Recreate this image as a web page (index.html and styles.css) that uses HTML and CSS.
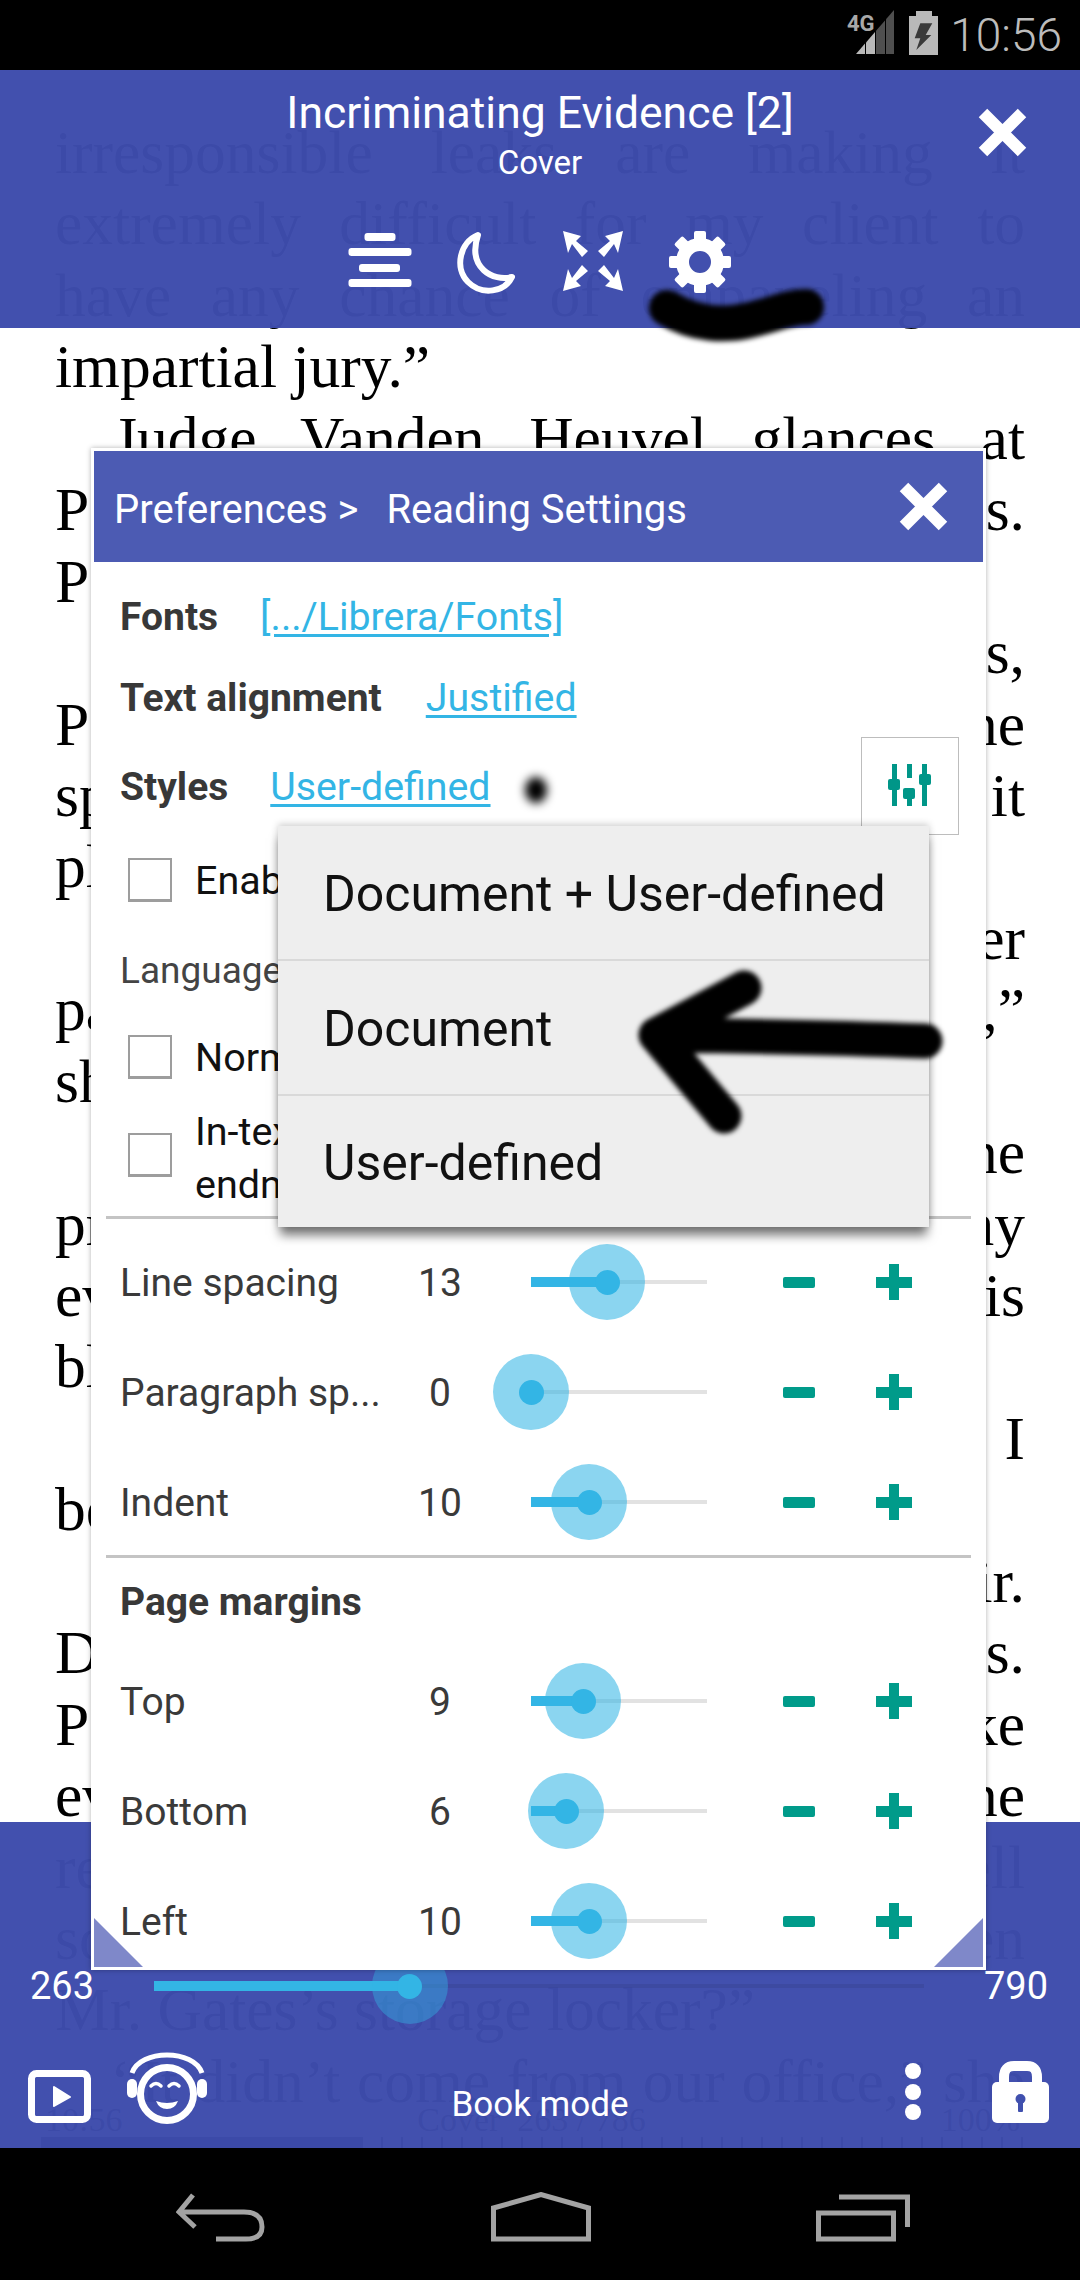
FILE: index.html
```html
<!DOCTYPE html>
<html lang="en">
<head>
<meta charset="utf-8">
<title>Reading Settings</title>
<link rel="stylesheet" href="styles.css">
</head>
<body>
<div class="page">
  <header class="status">
    <svg class="sig" width="50" height="50" viewBox="0 0 50 50">
      <polygon class="lit" points="11,46 20,35.6 20,46"/>
      <polygon class="lit" points="21,34.4 30,24 30,46 21,46"/>
      <polygon class="dim" points="31,22.8 40,12.4 40,46 31,46"/>
      <polygon class="dim" points="41,11.3 49,2 49,46 41,46"/>
      <text class="sig-text" x="2" y="23">4G</text>
    </svg>
    <svg class="batt" width="30" height="44" viewBox="0 0 30 44">
      <path class="lit" d="M7 0H23V5H29V44H0V5H7Z"/>
      <polygon class="bolt" points="11.3,12.3 23.3,12.3 16.7,24 22.3,24 7.3,39 11.3,27.3 5.7,27.3"/>
    </svg>
    <span class="time">10:56</span>
  </header>

  <main class="reader">
    <p class="ln">irresponsible leaks are making it</p>
    <p class="ln">extremely difficult for my client to</p>
    <p class="ln">have any chance of empaneling an</p>
    <p class="ln last">impartial jury.”</p>
    <p class="ln ind">Judge Vanden Heuvel glances at</p>
    <p class="ln">Paula shakes her head and sighs.</p>
    <p class="ln last">Paula.</p>
    <p class="ln ind">“Your Honor,” she says,</p>
    <p class="ln">Paula reaches for the phone</p>
    <p class="ln">speaks into it</p>
    <p class="ln last">place.</p>
    <p class="ln ind">“One other matter</p>
    <p class="ln">paper trail,”</p>
    <p class="ln last">she said.</p>
    <p class="ln ind">Nobody knows that she was alone</p>
    <p class="ln">prior to any</p>
    <p class="ln">evidence of this</p>
    <p class="ln last">blood.</p>
    <p class="ln ind">“Then I</p>
    <p class="ln last">believe.</p>
    <p class="ln ind">“Thank you, sir.</p>
    <p class="ln">Dr. Gates agrees.</p>
    <p class="ln">Paula would like</p>
    <p class="ln">every single one</p>
    <p class="ln">records as well</p>
    <p class="ln">so tell me when</p>
    <p class="ln last">Mr. Gates’s storage locker?”</p>
    <p class="ln ind">“It didn’t come from our office,” she</p>
    <div class="foot"><span>10:56</span><span>Cover &nbsp;263 / 786</span><span>100%</span></div>
    <div class="prog"><div class="prog-fill"></div></div>
  </main>

  <footer class="nav">
    <svg class="nav-i" width="90" height="50" viewBox="0 0 90 50"><path d="M17 3L3 20L19 35M3 20H68Q86 20 86 35Q86 47 70 47H40"/></svg>
    <svg class="nav-i" width="100" height="50" viewBox="0 0 100 50"><path d="M2.5 16L50 2.5L97.5 16V47H2.5Z"/></svg>
    <svg class="nav-i" width="94" height="50" viewBox="0 0 94 50"><path d="M2.5 21H77.5V47H2.5ZM23 5H91.5V35"/></svg>
  </footer>

  <section class="topbar">
    <div class="book-title">Incriminating Evidence [2]</div>
    <div class="book-sub">Cover</div>
    <div class="top-icons">
      <svg class="ic" width="64" height="64" viewBox="0 0 64 64">
        <rect x="16.5" y="3" width="31" height="8" rx="3"/><rect x="0.5" y="18" width="63" height="8" rx="3"/>
        <rect x="11" y="34" width="41" height="8" rx="3"/><rect x="0.5" y="49" width="63" height="8" rx="3"/>
      </svg>
      <svg class="ic" width="64" height="64" viewBox="0 0 64 64">
        <path class="moon" d="M23 5C5 12 -1 38 13 52C27 66 50 62 57 47C38 52 12 38 23 5Z"/>
      </svg>
      <svg class="ic" width="64" height="64" viewBox="0 0 64 64">
        <polygon points="1,1 19,6 14,11 26,21 20,27 10,14 6,23"/>
        <polygon transform="matrix(-1 0 0 1 62 0)" points="1,1 19,6 14,11 26,21 20,27 10,14 6,23"/>
        <polygon transform="matrix(1 0 0 -1 0 62)" points="1,1 19,6 14,11 26,21 20,27 10,14 6,23"/>
        <polygon transform="matrix(-1 0 0 -1 62 62)" points="1,1 19,6 14,11 26,21 20,27 10,14 6,23"/>
      </svg>
      <svg class="ic" width="64" height="64" viewBox="0 0 64 64">
        <circle class="ring" cx="31" cy="32" r="17.5"/>
        <g>
          <rect x="25" y="1" width="12" height="14" rx="2"/>
          <rect x="25" y="1" width="12" height="14" rx="2" transform="rotate(45 31 32)"/>
          <rect x="25" y="1" width="12" height="14" rx="2" transform="rotate(90 31 32)"/>
          <rect x="25" y="1" width="12" height="14" rx="2" transform="rotate(135 31 32)"/>
          <rect x="25" y="1" width="12" height="14" rx="2" transform="rotate(180 31 32)"/>
          <rect x="25" y="1" width="12" height="14" rx="2" transform="rotate(225 31 32)"/>
          <rect x="25" y="1" width="12" height="14" rx="2" transform="rotate(270 31 32)"/>
          <rect x="25" y="1" width="12" height="14" rx="2" transform="rotate(315 31 32)"/>
        </g>
      </svg>
    </div>
    <svg class="x top-x" width="49" height="49" viewBox="0 0 49 49"><path d="M5 5L44 44M44 5L5 44"/></svg>
  </section>

  <section class="bottombar">
    <div class="page-row">
      <span class="num">263</span>
      <div class="slider on-blue">
        <div class="track"></div>
        <div class="fill" style="width:33.2%"></div>
        <div class="halo" style="left:33.2%"></div>
        <div class="knob" style="left:33.2%"></div>
      </div>
      <span class="num">790</span>
    </div>
    <div class="tool-row">
      <div class="tools">
        <svg class="ic" width="63" height="53" viewBox="0 0 63 53">
          <rect class="play-box" x="3.5" y="3.5" width="56" height="46" rx="5"/>
          <path class="play-tri" d="M26 17L42 27L26 36Z"/>
        </svg>
        <svg class="ic head" width="80" height="72" viewBox="0 0 80 72">
          <path class="band" d="M5 21C13 -3 67 -3 75 21"/>
          <circle class="face" cx="40" cy="42" r="26.5"/>
          <rect x="0" y="27" width="10" height="19" rx="5"/>
          <rect x="70" y="27" width="10" height="19" rx="5"/>
          <path class="feature" d="M24 34Q29 29 34 34M42 34Q47 29 52 34"/>
          <path class="smile" d="M29 49Q40 53 51 49Q48 57 40 57Q32 57 29 49Z"/>
        </svg>
      </div>
      <span class="mode">Book mode</span>
      <div class="tools right">
        <svg class="ic dots" width="16" height="58" viewBox="0 0 16 58"><circle cx="8" cy="8" r="8"/><circle cx="8" cy="29" r="8"/><circle cx="8" cy="49" r="8"/></svg>
        <svg class="ic lock" width="57" height="62" viewBox="0 0 57 62">
          <path class="shackle" d="M12 24V16Q12 5 22 5H35Q45 5 45 16V24"/>
          <rect x="0" y="21" width="57" height="41" rx="5"/>
          <circle class="hole" cx="28.5" cy="38" r="5"/><rect class="hole" x="26" y="38" width="5" height="13" rx="1"/>
        </svg>
      </div>
    </div>
  </section>

  <section class="dialog">
    <div class="dlg-head">
      <span class="crumb">Preferences &gt;</span>
      <span class="crumb-now">Reading Settings</span>
      <svg class="x" width="49" height="49" viewBox="0 0 49 49"><path d="M5 5L44 44M44 5L5 44"/></svg>
    </div>
    <div class="dlg-body">
      <div class="row fonts"><b class="key">Fonts</b><a class="link">[.../Librera/Fonts]</a></div>
      <div class="row align"><b class="key">Text alignment</b><a class="link">Justified</a></div>
      <div class="row styles">
        <b class="key">Styles</b><a class="link">User-defined</a>
        <div class="tune">
          <svg width="44" height="42" viewBox="0 0 44 42">
            <path d="M4 0H9V42H4ZM19 0H24V14H19ZM19 34H24V42H19ZM34 0H39V42H34Z"/>
            <rect x="0" y="15" width="12" height="11" rx="2"/><rect x="15" y="24" width="12" height="11" rx="2"/><rect x="31" y="10" width="12" height="11" rx="2"/>
          </svg>
        </div>
      </div>
      <label class="row check enable"><span class="box"></span><span>Enable hyphenation</span></label>
      <div class="row lang">Language</div>
      <label class="row check normal"><span class="box"></span><span>Normal</span></label>
      <label class="row check intext"><span class="box"></span><span>In-text notes and<br>endnotes</span></label>
      <div class="rule"></div>
      <div class="srow">
        <span class="slabel">Line spacing</span><span class="sval">13</span>
        <div class="slider"><div class="track"></div><div class="fill" style="width:43.3%"></div><div class="halo" style="left:43.3%"></div><div class="knob" style="left:43.3%"></div></div>
        <span class="minus"></span><span class="plus"></span>
      </div>
      <div class="srow">
        <span class="slabel">Paragraph sp...</span><span class="sval">0</span>
        <div class="slider"><div class="track"></div><div class="fill" style="width:0%"></div><div class="halo" style="left:0%"></div><div class="knob" style="left:0%"></div></div>
        <span class="minus"></span><span class="plus"></span>
      </div>
      <div class="srow">
        <span class="slabel">Indent</span><span class="sval">10</span>
        <div class="slider"><div class="track"></div><div class="fill" style="width:33%"></div><div class="halo" style="left:33%"></div><div class="knob" style="left:33%"></div></div>
        <span class="minus"></span><span class="plus"></span>
      </div>
      <div class="rule"></div>
      <div class="row margins"><b class="key">Page margins</b></div>
      <div class="srow">
        <span class="slabel">Top</span><span class="sval">9</span>
        <div class="slider"><div class="track"></div><div class="fill" style="width:29.6%"></div><div class="halo" style="left:29.6%"></div><div class="knob" style="left:29.6%"></div></div>
        <span class="minus"></span><span class="plus"></span>
      </div>
      <div class="srow">
        <span class="slabel">Bottom</span><span class="sval">6</span>
        <div class="slider"><div class="track"></div><div class="fill" style="width:20%"></div><div class="halo" style="left:20%"></div><div class="knob" style="left:20%"></div></div>
        <span class="minus"></span><span class="plus"></span>
      </div>
      <div class="srow">
        <span class="slabel">Left</span><span class="sval">10</span>
        <div class="slider"><div class="track"></div><div class="fill" style="width:33%"></div><div class="halo" style="left:33%"></div><div class="knob" style="left:33%"></div></div>
        <span class="minus"></span><span class="plus"></span>
      </div>
    </div>
    <div class="corner corner-l"></div>
    <div class="corner corner-r"></div>
  </section>

  <div class="menu">
    <div class="menu-item">Document + User-defined</div>
    <div class="menu-item">Document</div>
    <div class="menu-item">User-defined</div>
  </div>

  <svg class="ink" width="1080" height="2280" viewBox="0 0 1080 2280">
    <defs><filter id="soft" x="-20%" y="-20%" width="140%" height="140%"><feGaussianBlur stdDeviation="2.6"/></filter>
    <filter id="softer" x="-80%" y="-80%" width="260%" height="260%"><feGaussianBlur stdDeviation="5"/></filter></defs>
    <g class="ink-lines" filter="url(#soft)">
      <path class="pen-top" d="M667 308C695 325 725 326 750 320C775 314 790 307 806 307"/>
      <path class="pen-arrow" d="M925 1041C850 1038 740 1036 656 1035M656 1035L744 988M656 1035L724 1116"/>
    </g>
    <ellipse class="ink-dot" cx="536" cy="790" rx="11" ry="13" filter="url(#softer)"/>
  </svg>
</div>
</body>
</html>
```

FILE: styles.css
```css
* { box-sizing: border-box; }
html, body { margin: 0; padding: 0; }
body { width: 1080px; height: 2280px; overflow: hidden; background: #fff; font-family: Roboto, "Liberation Sans", sans-serif; }
p { margin: 0; }
.page { position: relative; width: 1080px; height: 2280px; display: flex; flex-direction: column; overflow: hidden; }

/* status bar */
.status { height: 70px; flex: none; background: #000; display: flex; align-items: flex-start; justify-content: flex-end; padding-right: 18px; }
.sig { margin-top: 8px; }
.batt { margin: 11px 11px 0 14px; }
.lit { fill: #b9b9b9; }
.dim { fill: #4f4f4f; }
.bolt { fill: #3a3a3a; }
.sig-text { font: 700 22px Roboto, sans-serif; fill: #a8a8a8; }
.time { font-size: 46px; line-height: 70px; color: #bcbcbc; font-weight: 300; height: 70px; }

/* reader */
.reader { flex: 1; min-height: 0; overflow: hidden; background: #fff; padding: 47px 55px 0; font-family: "Liberation Serif", serif; color: #000; }
.ln { font-size: 61.5px; line-height: 71.45px; height: 71.45px; text-align: justify; text-align-last: justify; white-space: nowrap; }
.ln.last { text-align-last: left; }
.ln.ind { padding-left: 58px; }
.foot { display: flex; justify-content: space-between; padding: 0 5px 0 0; margin: -5px 0 0 -10px; font-size: 34px; line-height: 16px; height: 16px; }
.prog { height: 11px; margin: 9px -8px 0 -14px; background: repeating-linear-gradient(90deg, #000 0 2px, transparent 2px 20px); }
.prog-fill { height: 100%; width: 320px; background: #000; }

/* navigation bar */
.nav { height: 132px; flex: none; background: #000; display: flex; gap: 225px; padding: 44px 0 0 176px; }
.nav-i { fill: none; stroke: #a3a3a3; stroke-width: 5; }

/* translucent bars over the page */
.topbar { position: absolute; left: 0; top: 70px; width: 1080px; height: 258px; padding-top: 17px; background: rgba(61, 76, 172, .975); color: #fff; text-align: center; }
.book-title { font-size: 44.5px; line-height: 52px; }
.book-sub { font-size: 33px; line-height: 40px; margin-top: 4px; }
.top-icons { display: flex; justify-content: center; gap: 43px; margin-top: 47px; }
.ic { fill: #fff; display: block; }
.moon { fill: none; stroke: #fff; stroke-width: 6; stroke-linejoin: round; }
.ring { fill: none; stroke: #fff; stroke-width: 13; }
.x { fill: none; stroke: #fff; stroke-width: 12; flex: none; }
.top-x { position: absolute; left: 978px; top: 38px; }

.bottombar { position: absolute; left: 0; top: 1822px; width: 1080px; height: 326px; padding-top: 144px; background: rgba(61, 76, 172, .975); color: #fff; }
.page-row { display: flex; align-items: center; gap: 60px; height: 40px; padding: 0 32px 0 30px; }
.num { font-size: 38px; line-height: 40px; }
.tool-row { display: flex; align-items: flex-end; justify-content: space-between; height: 71px; margin-top: 46px; padding: 0 31px 0 28px; position: relative; }
.tools { display: flex; align-items: flex-end; gap: 36px; }
.tools.right { gap: 71px; }
.dots { margin-bottom: 2px; }
.head { margin-bottom: -1px; }
.play-box { fill: none; stroke: #fff; stroke-width: 7; }
.play-tri { fill: #fff; stroke: #fff; stroke-width: 2; stroke-linejoin: round; }
.band { fill: none; stroke: #fff; stroke-width: 5; }
.face { fill: none; stroke: #fff; stroke-width: 7; }
.feature { fill: none; stroke: #fff; stroke-width: 3.5; stroke-linecap: round; }
.smile { fill: #fff; }
.shackle { fill: none; stroke: #fff; stroke-width: 10; }
.hole { fill: #4050ae; }
.mode { font-size: 35px; line-height: 36px; position: absolute; left: 0; right: 0; text-align: center; bottom: 0; }

/* sliders */
.slider { position: relative; flex: 1; height: 10px; }
.track { position: absolute; left: 0; right: 0; top: 3px; height: 4px; background: #e2e2e2; }
.fill { position: absolute; left: 0; top: 0; height: 10px; background: #33b5e5; }
.halo { position: absolute; top: 5px; width: 76px; height: 76px; margin: -38px 0 0 -38px; border-radius: 50%; background: rgba(51, 181, 229, .57); }
.knob { position: absolute; top: 5px; width: 25px; height: 25px; margin: -12.5px 0 0 -12.5px; border-radius: 50%; background: #33b5e5; }
.on-blue .track { background: rgba(0, 0, 0, .07); }
.on-blue .halo { background: rgba(51, 181, 229, .42); }

/* dialog */
.dialog { position: absolute; left: 91px; top: 448px; width: 895px; height: 1522px; background: #fff; border: 3px solid #fff; box-shadow: 0 0 5px rgba(0, 0, 0, .3); display: flex; flex-direction: column; overflow: hidden; }
.dlg-head { flex: none; height: 111px; background: #4c5bb3; color: #fff; display: flex; align-items: center; padding: 5px 35px 0 20px; font-size: 40px; }
.crumb-now { margin-left: 28px; flex: 1; }
.dlg-head .x { margin-top: -5px; }
.dlg-body { padding-top: 14px; display: flex; flex-direction: column; flex: none; color: #3a3a3a; }
.row { display: flex; align-items: center; padding: 0 24px 0 26px; font-size: 39.3px; flex: none; }
.key { font-weight: 700; font-size: 39px; color: #383838; }
.link { color: #33b5e5; text-decoration: underline; text-underline-offset: 4px; }
.fonts { height: 82px; gap: 42px; }
.align { height: 80px; gap: 44px; }
.styles { height: 98px; gap: 42px; position: relative; }
.tune { margin: -3px 0 0 auto; width: 98px; height: 98px; border: 1px solid #bdbdbd; display: flex; align-items: center; justify-content: center; }
.tune svg { fill: #009688; display: block; margin-bottom: 2px; }
.check { gap: 23px; padding-left: 34px; color: #111; line-height: 53px; font-size: 39.5px; }
.box { width: 44px; height: 44px; flex: none; border: 2px solid #9d9d9d; border-bottom-width: 3px; }
.enable { height: 86px; padding-top: 2px; }
.lang { height: 96px; color: #444; font-size: 37px; }
.normal { height: 78px; }
.intext { height: 120px; padding-top: 4px; }
.intext .box { margin-top: -6px; }
.rule { height: 3px; flex: none; margin: 0 12px; background: #c4c4c4; }
.srow { flex: none; height: 110px; display: grid; grid-template-columns: 279px 82px 224px 109px 98px; align-items: center; padding-left: 26px; font-size: 39px; color: #3a3a3a; }
.slabel, .sval { padding-top: 2px; }
.rule + .srow { margin-top: 8px; }
.srow + .rule { margin-top: -2px; }
.srow .slider { margin-left: 50px; width: 176px; grid-column: 3; }
.sval { text-align: center; }
.minus { position: relative; display: block; width: 32px; height: 11px; margin-left: 78px; background: #009b8a; border-radius: 2px; }
.plus { position: relative; display: block; width: 36px; height: 36px; margin-left: 62px; border-radius: 2px; background: linear-gradient(#009b8a, #009b8a) center / 100% 11px no-repeat, linear-gradient(#009b8a, #009b8a) center / 10px 100% no-repeat; }
.margins { height: 88px; }
.corner { position: absolute; bottom: 0; width: 49px; height: 49px; background: #7f88c9; }
.corner-l { left: 0; clip-path: polygon(0 0, 0 100%, 100% 100%); }
.corner-r { right: 0; clip-path: polygon(100% 0, 100% 100%, 0 100%); }

/* popup menu */
.menu { position: absolute; left: 278px; top: 826px; width: 651px; height: 401px; background: #eee; box-shadow: 0 10px 10px -2px rgba(0, 0, 0, .55), 0 -2px 7px rgba(0, 0, 0, .18); display: flex; flex-direction: column; }
.menu-item { height: 135px; flex: none; padding: 3px 0 0 45px; display: flex; align-items: center; font-size: 50px; color: #111; border-bottom: 2px solid #d9d9d9; }
.menu-item:last-child { border-bottom: 0; height: 131px; }

/* pen marks on the screenshot */
.ink { position: absolute; left: 0; top: 0; pointer-events: none; }
.ink-lines { fill: none; stroke: #000; stroke-linecap: round; stroke-linejoin: round; }
.pen-top { stroke-width: 36px; }
.pen-arrow { stroke-width: 35px; }
.ink-dot { fill: #000; }
```
